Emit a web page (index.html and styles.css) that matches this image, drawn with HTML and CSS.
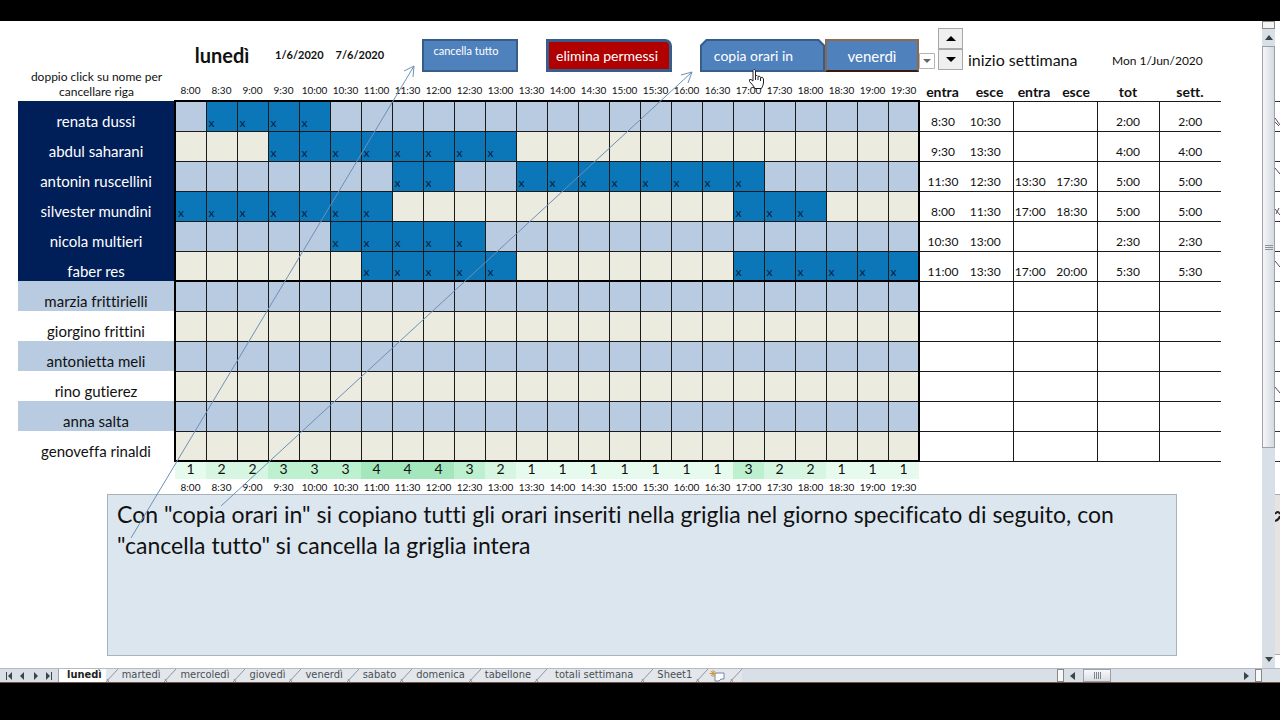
FILE: index.html
```
<!DOCTYPE html>
<html lang="it">

<head>
    <meta charset="UTF-8">
    <meta name="viewport" content="width=device-width, initial-scale=1.0">
    <title>Orari settimana</title>
    <link rel="stylesheet" href="styles.css">
</head>

<body>
    <main class="workspace">
        <div class="sheet">
            <header class="toolbar">
                <h1>lunedì</h1>
                <div class="dates"><span>1/6/2020</span><span>7/6/2020</span></div>
                <div class="actions">
                    <button class="btn btn-clear">cancella tutto</button>
                    <button class="btn btn-delete">elimina permessi</button>
                    <div class="copy">
                        <button class="btn btn-copy"><span>copia orari in</span></button>
                        <select class="day" aria-label="Giorno di destinazione">
                            <option>lunedì</option>
                            <option>martedì</option>
                            <option>mercoledì</option>
                            <option>giovedì</option>
                            <option selected>venerdì</option>
                            <option>sabato</option>
                            <option>domenica</option>
                        </select>
                        <svg class="day-arrow" viewBox="0 0 16 16"><path d="M.5.5h15v15H.5z" fill="#fff" stroke="#b5b5b5"/><path d="M4 6h8l-4 4z" fill="#666"/></svg>
                    </div>
                </div>
                <div class="spinner">
                    <button aria-label="Settimana precedente"><svg viewBox="0 0 10 5"><path d="M0 5h10L5 0z"/></svg></button>
                    <button aria-label="Settimana successiva"><svg viewBox="0 0 10 5"><path d="M0 0h10L5 5z"/></svg></button>
                </div>
                <span class="week-label">inizio settimana</span>
                <span class="week-date">Mon 1/Jun/2020</span>
            </header>

            <table class="roster">
                <colgroup>
                    <col class="col-name">
                    <col span="24">
                    <col class="col-in" span="2">
                    <col class="col-out" span="2">
                    <col class="col-tot" span="2">
                </colgroup>
                <thead id="head"></thead>
                <tbody id="rows"></tbody>
                <tfoot id="foot"></tfoot>
            </table>

            <p class="note">Con "copia orari in" si copiano tutti gli orari inseriti nella griglia nel giorno specificato di seguito, con "cancella tutto" si cancella la griglia intera</p>

            <svg class="arrows" width="1262" height="647" viewBox="0 21 1262 647">
                <path d="M131 538 414 66M404 71l10-5-1 11M221 506 692 72M681 75l11-3-4 11"/>
            </svg>
            <svg class="cursor" width="17" height="22" viewBox="0 0 17 22">
                <path d="M5 13V2.500Q6 0 7.500 2.500V8Q9 6.500 10 8.500 11.500 7 12.500 9.500 15 8.500 15.500 11V15Q15 18 13.500 20.500H7Q5 17 1.500 13.500 1 10.500 3 11.500z" fill="#fff" stroke="#222"/>
                <path d="M7.500 8v4M10 9v3M12.500 10v3" fill="none" stroke="#222"/>
            </svg>
        </div>

        <div class="scroll-v">
            <div class="split-h"></div>
            <button aria-label="Scorri su"><svg viewBox="0 0 8 5"><path d="M0 5h8L4 0z"/></svg></button>
            <div class="thumb-v"><i></i><i></i><i></i></div>
            <button class="down" aria-label="Scorri giù"><svg viewBox="0 0 8 5"><path d="M0 0h8L4 5z"/></svg></button>
        </div>
        <div class="pane">
            <svg width="5" height="647" viewBox="0 21 5 647">
                <path d="M0 494h5v160H0z" fill="#e6e4e3"/>
                <path d="M0 101.500h5M0 131.500h5M0 161.500h5M0 191.500h5M0 221.500h5M0 251.500h5M0 281.500h5M0 311.500h5M0 341.500h5M0 371.500h5M0 401.500h5M0 431.500h5M0 461.500h5" stroke="#333"/>
                <path d="M0 494.500h5M0 654.500h5" stroke="#aaa"/>
                <path d="M0 118l5 7M0 122l4 4M0 168l5 6M0 209l5 6M1 214l3-6M0 261l5 6M0 387l5 6" stroke="#5d4a5c" fill="none"/>
                <path d="M0 514q3-4 5 0M0 521q4-1 5-5" stroke="#222" stroke-width="2" fill="none"/>
            </svg>
        </div>
    </main>

    <footer class="tabbar">
        <div class="tab-nav">
            <button aria-label="Primo foglio"><svg viewBox="0 0 8 8"><path d="M1 0h1v8H1zM7 0v8L3 4z"/></svg></button>
            <button aria-label="Foglio precedente"><svg viewBox="0 0 8 8"><path d="M6 0v8L2 4z"/></svg></button>
            <button aria-label="Foglio successivo"><svg viewBox="0 0 8 8"><path d="M2 0v8l4-4z"/></svg></button>
            <button aria-label="Ultimo foglio"><svg viewBox="0 0 8 8"><path d="M6 0h1v8H6zM1 0v8l4-4z"/></svg></button>
        </div>
        <nav class="tabs" id="tabs"></nav>
        <div class="scroll-h">
            <div class="split"></div>
            <button aria-label="Scorri a sinistra"><svg viewBox="0 0 5 8"><path d="M5 0v8L0 4z"/></svg></button>
            <div class="thumb-h"><i></i><i></i><i></i><i></i></div>
            <button class="right" aria-label="Scorri a destra"><svg viewBox="0 0 5 8"><path d="M0 0v8l5-4z"/></svg></button>
            <div class="split"></div>
        </div>
    </footer>

    <script src="script.js"></script>
</body>

</html>
```
FILE: styles.css
```
* {
    box-sizing: border-box;
}

body {
    margin: 0;
    min-height: 100vh;
    display: flex;
    flex-direction: column;
    background: #000;
    padding: 21px 0 37px;
    font-family: Lato, 'Liberation Sans', sans-serif;
    font-variant-ligatures: none;
    color: #111;
}

button,
select {
    font-family: inherit;
    margin: 0;
    padding: 0;
    border: none;
    cursor: pointer;
}

svg {
    display: block;
}

.workspace {
    flex: 1;
    display: flex;
    background: #fff;
}

.sheet {
    position: relative;
    flex: 1;
    padding: 0 41px 12px 18px;
}

/* Top controls */
.toolbar {
    display: grid;
    grid-template-columns: 92px 147px 1fr 30px 132px 121px;
    height: 52px;
    margin-bottom: -4px;
    padding-left: 158px;
}

h1 {
    margin: 0;
    padding-top: 22px;
    font-size: 20px;
    line-height: 24px;
    text-align: center;
}

.dates {
    display: flex;
    gap: 12px;
    padding: 26px 0 0 7px;
    font-size: 11px;
    font-weight: bold;
    line-height: 16px;
}

.actions {
    display: flex;
    gap: 28px;
    padding: 18px 0 0 7px;
}

.btn {
    height: 33px;
    border: 2px solid #385d8a;
    background: #4f81bd;
    color: #fff;
    font-size: 14px;
}

.btn-clear {
    width: 96px;
    padding: 0 8px 10px 0;
    font-size: 11px;
}

.btn-delete {
    width: 126px;
    padding-right: 4px;
    background: #b00000;
    border-width: 3px;
    border-radius: 0 7px 0 0;
}

.copy {
    display: flex;
}

.btn-copy {
    position: relative;
    width: 125px;
    padding-right: 18px;
    border: none;
    background: #385d8a;
    clip-path: polygon(6px 0, 119px 0, 100% 6px, 100% 100%, 0 100%, 0 6px);
}

.btn-copy::before {
    content: "";
    position: absolute;
    inset: 2px;
    background: #4f81bd;
    clip-path: polygon(5px 0, 116px 0, 100% 5px, 100% 100%, 0 100%, 0 5px);
}

.btn-copy span {
    position: relative;
}

.day {
    appearance: none;
    width: 94px;
    height: 33px;
    border: 2px solid #8c6a50;
    border-bottom-color: #3a1a10;
    border-radius: 0;
    background: #4f81bd;
    color: #fff;
    font-size: 15px;
    text-align: center;
    text-align-last: center;
}

.day-arrow {
    width: 16px;
    height: 16px;
    margin-top: 14px;
}

.spinner {
    display: flex;
    flex-direction: column;
    width: 25px;
    padding-top: 7px;
}

.spinner button {
    display: grid;
    place-items: center;
    height: 21px;
    background: #efefef;
    border: 1px solid #a8a8a8;
}

.spinner svg {
    width: 10px;
    height: 5px;
}

.week-label {
    padding-top: 29px;
    font-size: 16px;
    line-height: 20px;
}

.week-date {
    padding: 30px 0 0 12px;
    font-size: 12px;
    line-height: 20px;
    white-space: nowrap;
}

/* Roster grid */
.roster {
    width: 100%;
    table-layout: fixed;
    border-collapse: collapse;
}

.col-name {
    width: 157px;
}

.col-in {
    width: 47px;
}

.col-out {
    width: 42px;
}

.col-tot {
    width: 62px;
}

th,
td {
    padding: 0;
    font-weight: normal;
    text-align: center;
    white-space: nowrap;
    overflow: hidden;
}

thead th {
    height: 32px;
    padding-bottom: 2px;
    vertical-align: bottom;
    font-size: 10px;
    line-height: 15px;
}

thead .hint {
    font-size: 12px;
    white-space: normal;
}

thead .sum-head {
    font-size: 14px;
    font-weight: bold;
}

tbody th,
tbody td {
    height: 30px;
    font-size: 15px;
    line-height: 20px;
    vertical-align: bottom;
}

tbody tr:nth-child(odd) th,
tbody tr:nth-child(odd) .slot {
    background: #b8cbe0;
}

tbody tr.active th {
    background: #001e58;
    color: #fff;
}

tbody .slot {
    background: #ebebe0;
    border: 1px solid #1a1a1a;
    padding-left: 2px;
    font-size: 12px;
    line-height: 16px;
    text-align: left;
}

tbody tr .slot.busy,
tbody tr:nth-child(odd) .slot.busy {
    background: #0b76b8;
    color: #04203c;
}

tbody .first {
    border-left: 2px solid #000;
}

tbody .last {
    border-right: 2px solid #000;
}

tbody tr:first-child .slot {
    border-top: 2px solid #000;
}

tbody tr:nth-child(6) .slot,
tbody tr:last-child .slot {
    border-bottom: 2px solid #000;
}

tbody .sum {
    border-top: 1px solid #1a1a1a;
    border-bottom: 1px solid #1a1a1a;
    font-size: 12px;
    line-height: 18px;
}

tbody .shift {
    padding-right: 8px;
}

.line {
    border-left: 1px solid #1a1a1a;
}

tfoot td {
    height: 18px;
    font-size: 14px;
    line-height: 14px;
    vertical-align: top;
}

tfoot .times td {
    height: 15px;
    font-size: 10px;
    vertical-align: bottom;
}

.n1 {
    background: #e6fbee;
}

.n2 {
    background: #d6f6e1;
}

.n3 {
    background: #bdf0cf;
}

.n4 {
    background: #a4e7bd;
}

.note {
    margin: 0 44px 0 89px;
    min-height: 162px;
    padding: 4px 9px;
    border: 1px solid #a9b3bd;
    background: #dce6ef;
    font-size: 23px;
    line-height: 31px;
}

/* Annotations over the sheet */
.arrows {
    position: absolute;
    top: 0;
    left: 0;
    pointer-events: none;
    fill: none;
    stroke: #6d8fb8;
}

.cursor {
    position: absolute;
    top: 47px;
    left: 748px;
    pointer-events: none;
}

/* Scroll bars */
.scroll-v {
    display: flex;
    flex-direction: column;
    width: 13px;
    background: #d8dfe7;
}

.split-h {
    height: 8px;
    border: 1px solid #888;
    background: #f4f4f4;
}

.scroll-v button {
    display: grid;
    place-items: center;
    height: 17px;
    background: #d8dfe7;
}

.scroll-v button svg {
    width: 8px;
    height: 5px;
}

.scroll-v .down {
    margin-top: auto;
}

.scroll-v path,
.scroll-h path,
.tab-nav path {
    fill: #3b4548;
}

.thumb-v {
    display: flex;
    flex-direction: column;
    align-items: center;
    justify-content: center;
    gap: 1px;
    flex: 0 0 65%;
    max-height: 402px;
    border: 1px solid #9aa1a9;
    background: linear-gradient(90deg, #f5f6f8, #d5dae0);
}

.thumb-v i {
    width: 8px;
    height: 1px;
    background: #8a9199;
}

.pane {
    width: 5px;
}

/* Sheet tabs */
.tabbar {
    display: flex;
    height: 15px;
    background: #d8dfe7;
    border-top: 1px solid #b3bac1;
    border-bottom: 1px solid #70564a;
}

.tab-nav {
    display: flex;
    width: 59px;
    justify-content: space-around;
    padding: 0 2px;
    border-right: 1px solid #9aa1a9;
}

.tabbar button {
    display: grid;
    place-items: center;
    background: none;
}

.tab-nav svg {
    width: 8px;
    height: 8px;
}

.tabs {
    display: flex;
    flex: 1;
    font-family: 'DejaVu Sans Condensed', 'DejaVu Sans', sans-serif;
    font-size: 11px;
    line-height: 12px;
}

.tabs a {
    padding: 0 4px;
    background: #e3e7eb;
    color: #4a4f54;
    text-decoration: none;
    white-space: nowrap;
}

.tabs a.current {
    padding-left: 8px;
    background: #fff;
    color: #222;
    font-weight: bold;
}

.tabs a.wide {
    padding: 0 8px;
}

.tabs svg {
    flex: none;
    width: 12px;
    height: 13px;
    background: #e3e7eb;
    fill: none;
    stroke: #8d959d;
}

.tabs .new {
    width: 22px;
}

.scroll-h {
    display: flex;
    width: 223px;
    padding-right: 18px;
}

.scroll-h .split {
    width: 7px;
    border: 1px solid #888;
    background: #f8f8f8;
}

.scroll-h button {
    width: 17px;
}

.scroll-h svg {
    width: 5px;
    height: 8px;
}

.thumb-h {
    display: flex;
    align-items: center;
    justify-content: center;
    gap: 1px;
    width: 28px;
    margin-left: 2px;
    border: 1px solid #9aa1a9;
    background: linear-gradient(#f8f9fa, #d9dde2);
}

.thumb-h i {
    width: 1px;
    height: 7px;
    background: #7d848b;
}

.scroll-h .right {
    margin-left: auto;
}
```
FILE: script.js
```
// busy: [first slot, last slot] pairs, slot 0 is 8:00, half an hour each
const people = [
    { name: "renata dussi", busy: [[1, 4]], sums: ["8:30", "10:30", "", "", "2:00", "2:00"] },
    { name: "abdul saharani", busy: [[3, 10]], sums: ["9:30", "13:30", "", "", "4:00", "4:00"] },
    { name: "antonin ruscellini", busy: [[7, 8], [11, 18]], sums: ["11:30", "12:30", "13:30", "17:30", "5:00", "5:00"] },
    { name: "silvester mundini", busy: [[0, 6], [18, 20]], sums: ["8:00", "11:30", "17:00", "18:30", "5:00", "5:00"] },
    { name: "nicola multieri", busy: [[5, 9]], sums: ["10:30", "13:00", "", "", "2:30", "2:30"] },
    { name: "faber res", busy: [[6, 10], [18, 23]], sums: ["11:00", "13:30", "17:00", "20:00", "5:30", "5:30"] },
    { name: "marzia frittirielli" },
    { name: "giorgino frittini" },
    { name: "antonietta meli" },
    { name: "rino gutierez" },
    { name: "anna salta" },
    { name: "genoveffa rinaldi" }
];
const counts = [1, 2, 2, 3, 3, 3, 4, 4, 4, 3, 2, 1, 1, 1, 1, 1, 1, 1, 3, 2, 2, 1, 1, 1];
const sheets = ["lunedì", "martedì", "mercoledì", "giovedì", "venerdì", "sabato", "domenica", "tabellone", "totali settimana", "Sheet1"];

const times = counts.map((c, i) => `${8 + Math.floor(i / 2)}:${i % 2 ? "30" : "00"}`);

document.getElementById("head").innerHTML =
    `<tr><th class="hint">doppio click su nome per cancellare riga</th>` +
    times.map(t => `<th>${t}</th>`).join("") +
    ["entra", "esce", "entra", "esce", "tot", "sett."].map(t => `<th class="sum-head">${t}</th>`).join("") + `</tr>`;

document.getElementById("rows").innerHTML = people.map(p => {
    const busy = p.busy || [];
    const sums = p.sums || ["", "", "", "", "", ""];
    const slots = times.map((t, i) => {
        const on = busy.some(b => i >= b[0] && i <= b[1]);
        const edge = i === 0 ? " first" : i === 23 ? " last" : "";
        return `<td class="slot${on ? " busy" : ""}${edge}">${on ? "x" : ""}</td>`;
    }).join("");
    const cells = sums.map((s, i) => `<td class="sum${[2, 4, 5].includes(i) ? " line" : ""}${[1, 2, 3].includes(i) ? " shift" : ""}">${s}</td>`).join("");
    return `<tr class="${p.busy ? "active" : ""}"><th>${p.name}</th>${slots}${cells}</tr>`;
}).join("");

document.getElementById("foot").innerHTML =
    `<tr><td></td>${counts.map(c => `<td class="n${c}">${c}</td>`).join("")}</tr>` +
    `<tr class="times"><td></td>${times.map(t => `<td>${t}</td>`).join("")}</tr>`;

const slash = `<svg viewBox="0 0 12 13"><path d="M0 13 12 0M1 10l2 3"/></svg>`;
document.getElementById("tabs").innerHTML = sheets.map((s, i) =>
    `<a href="#"${i === 0 ? ` class="current"` : s === "totali settimana" ? ` class="wide"` : ""}>${s}</a>${slash}`).join("") +
    `<svg class="new" viewBox="0 0 22 13"><path d="M7 4h9v6h-3l-2 2H7z" fill="#fff" stroke="#7087a8"/><path d="M5 1v7M1.500 4.500h7M3 2l4 5M7 2 3 7" stroke="#c99a3a"/></svg>${slash}`;
```
